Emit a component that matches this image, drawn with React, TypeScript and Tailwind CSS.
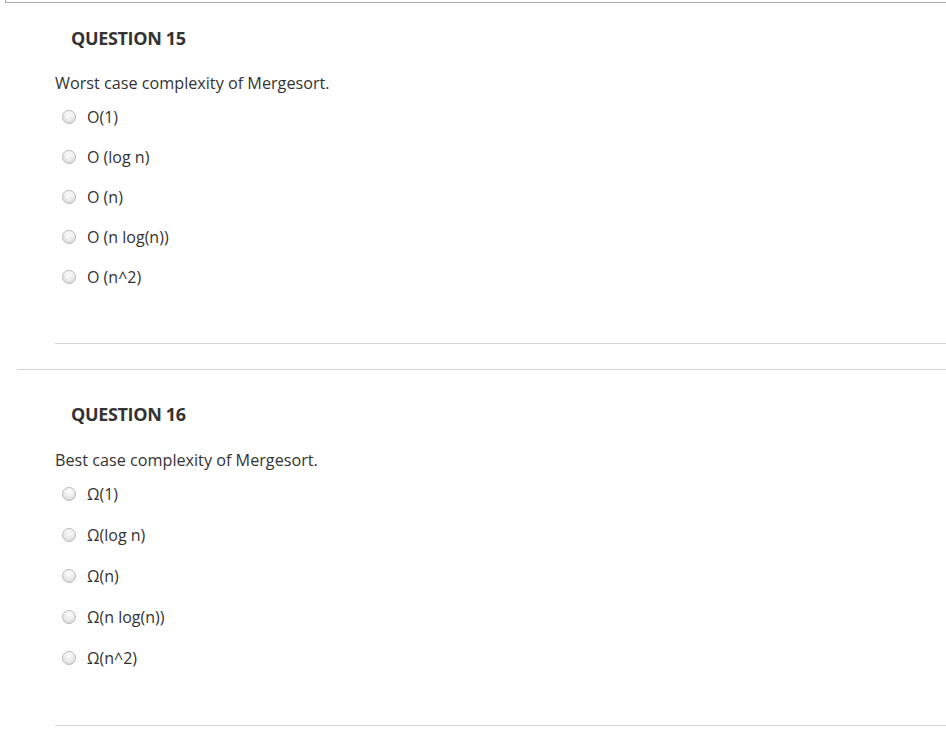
import React from "react";

const q15 = ["O(1)", "O (log n)", "O (n)", "O (n log(n))", "O (n^2)"];
const q16 = ["Ω(1)", "Ω(log n)", "Ω(n)", "Ω(n log(n))", "Ω(n^2)"];

function Radio() {
  return (
    <span className="inline-block w-[14px] h-[14px] rounded-full border border-[#b8b8b8] bg-[radial-gradient(circle_at_50%_35%,#fdfdfd_0%,#e8e8e8_55%,#cfcfcf_100%)] shadow-[inset_0_1px_1px_rgba(255,255,255,0.8)]" />
  );
}

function Question({
  num,
  text,
  options,
  rowH,
  topPad,
  qGap,
  optGap,
  bottomPad,
}: {
  num: number;
  text: string;
  options: string[];
  rowH: string;
  topPad: string;
  qGap: string;
  optGap: string;
  bottomPad: string;
}) {
  return (
    <div className={`ml-[55px] border-b border-[#d3d3d3] ${topPad} ${bottomPad}`}>
      <div className="pl-[16px] h-[20px] flex items-center text-[18px] font-bold text-[#333333] tracking-[-0.35px]">
        QUESTION {num}
      </div>
      <div className={`${qGap} h-[20px] flex items-center text-[16.2px] text-[#333333]`}>
        {text}
      </div>
      <div className={optGap}>
        {options.map((o) => (
          <div key={o} className={`${rowH} flex items-center`}>
            <span className="ml-[7px] flex items-center">
              <Radio />
            </span>
            <span className="ml-[11px] text-[16px] text-[#333333]">{o}</span>
          </div>
        ))}
      </div>
    </div>
  );
}

export default function App() {
  return (
    <div className="w-[946px] h-[736px] bg-white overflow-hidden font-['Open_Sans',sans-serif]">
      <div className="ml-[5px] h-[3px] border-l border-b border-[#a9a9a9]" />
      <Question
        num={15}
        text="Worst case complexity of Mergesort."
        options={q15}
        rowH="h-[40px]"
        topPad="pt-[25px]"
        qGap="mt-[25px]"
        optGap="mt-[4px]"
        bottomPad="pb-[46px]"
      />
      <div className="mt-[25px] ml-[17px] border-t border-[#d3d3d3]" />
      <Question
        num={16}
        text="Best case complexity of Mergesort."
        options={q16}
        rowH="h-[41px]"
        topPad="pt-[34px]"
        qGap="mt-[26px]"
        optGap="mt-[3px]"
        bottomPad="pb-[47px]"
      />
    </div>
  );
}
